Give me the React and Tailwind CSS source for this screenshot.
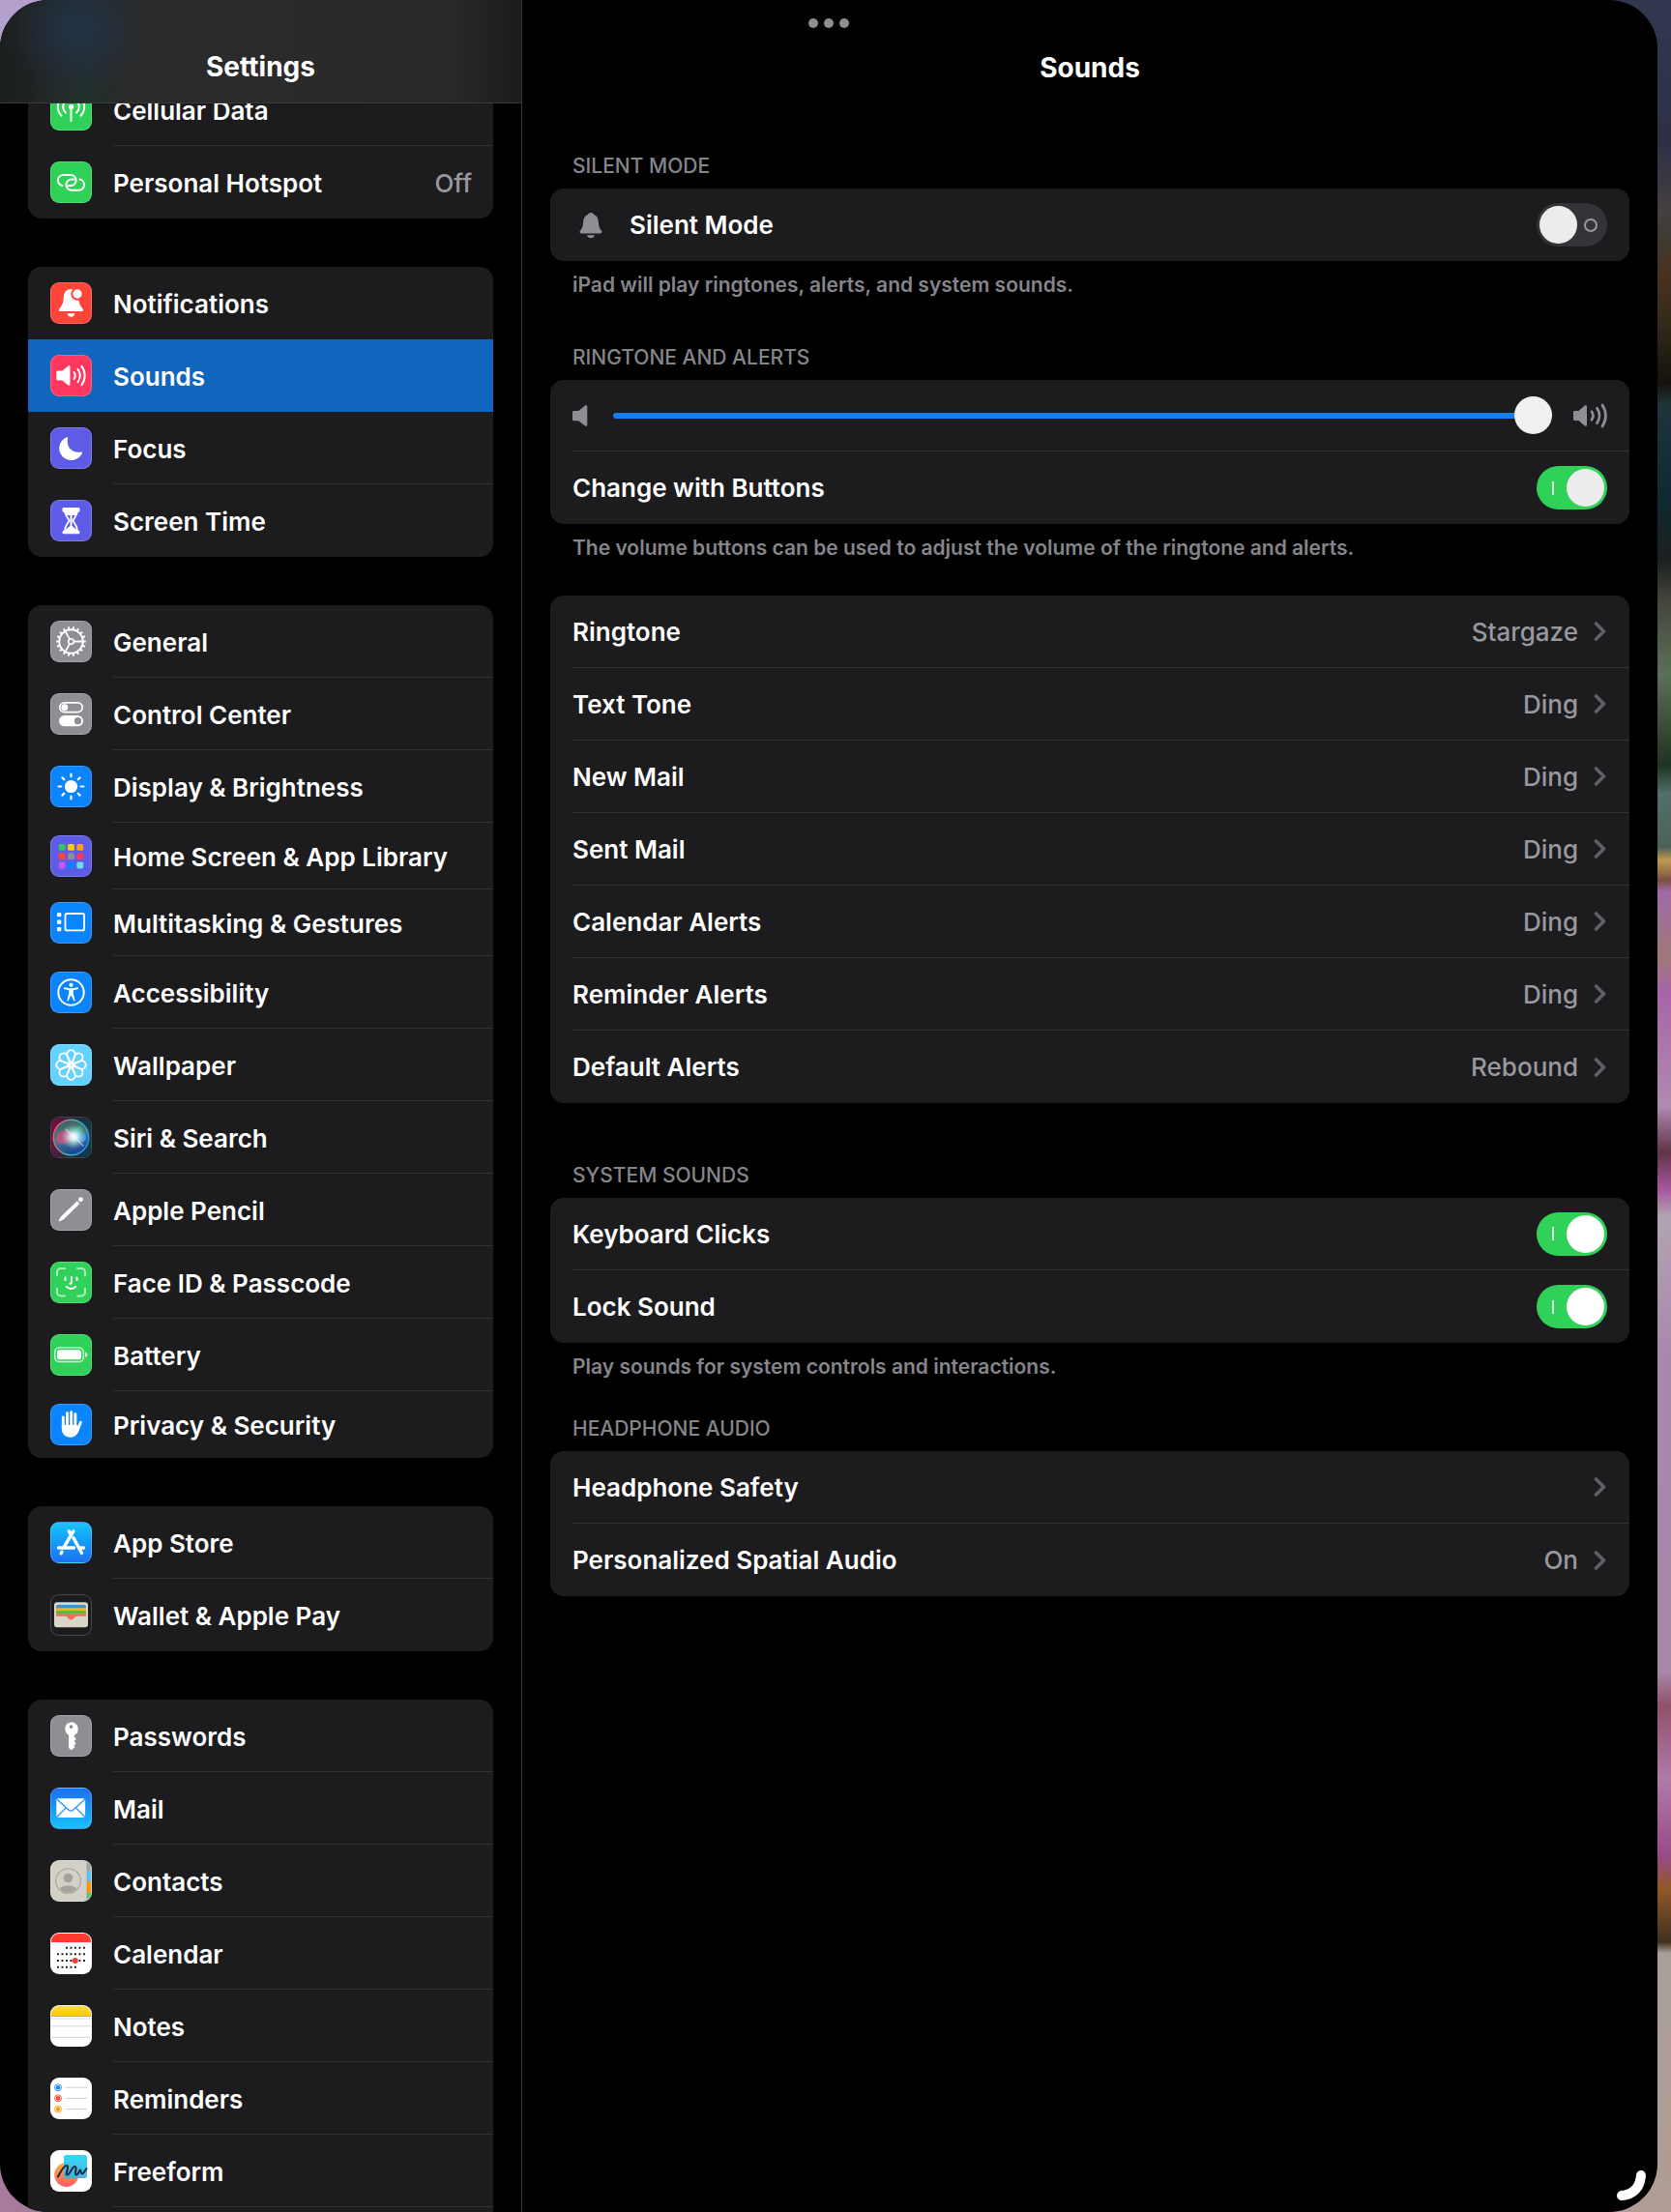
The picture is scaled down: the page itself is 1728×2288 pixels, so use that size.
import React, { useState } from 'react';

const WALLPAPER =
    'linear-gradient(to bottom, #313850 0%, #2d3045 6.4%, #453f40 9.6%, #3f3a30 10.9%, #4a3020 12.5%, #352c1c 14.4%, #14120a 17.3%, #20343a 18.3%, #0e2a30 22.4%, #1c2020 25.3%, #45483c 27.3%, #5b7059 30.5%, #1f3320 34.6%, #52706a 35.9%, #4d6058 38.3%, #c09a50 38.9%, #7a5040 39.8%, #a06aa8 40.3%, #a07878 43.3%, #a864a8 44.9%, #b08ab0 50%, #603448 52.1%, #a858a0 53.8%, #b0a4b0 55%, #a888ac 61.4%, #a888a8 75.6%, #90506a 77.1%, #b07aa8 80.4%, #984a88 83.9%, #905828 85.4%, #403020 87.8%, #a8a098 88.3%, #b09c94 100%)';

const teeth = Array.from({ length: 18 }, (_, i) => i * 20);
const petals = [0, 45, 90, 135, 180, 225, 270, 315];

const glyphs = {
    cellular: (
        <g fill="none" stroke="#fff" strokeWidth="2" strokeLinecap="round">
            <circle cx="21.5" cy="18.5" r="2.6" fill="#fff" stroke="none" />
            <path d="M21.5 19v14M15.8 24.5a8.2 8.2 0 0 1 0-12M27.2 24.5a8.2 8.2 0 0 0 0-12M11.5 27.7a13.4 13.4 0 0 1 0-18.4M31.5 27.7a13.4 13.4 0 0 0 0-18.4" />
        </g>
    ),
    hotspot: (
        <g fill="none" stroke="#fff" strokeWidth="2" strokeLinecap="round">
            <path d="M12.5 25a5.6 5.6 0 0 1 1-11.1h7.5a5.6 5.6 0 0 1 0 11.2h-2" />
            <path d="M30.5 18.6a5.6 5.6 0 0 1-1 11.1H22a5.6 5.6 0 0 1 0-11.2h2" />
        </g>
    ),
    notifications: (
        <g>
            <path fill="#fff" d="M21.5 7c-5.2 0-7.4 4-7.7 8.5-.3 5.5-1.3 8-4.3 11.8-1 1.4-.6 2.700 1.100 2.700h21.800c1.700 0 2.100-1.300 1.100-2.700-3-3.800-4-6.300-4.300-11.800C28.900 11 26.700 7 21.500 7zM17.600 32.200h7.800c-.4 2.300-1.900 3.600-3.900 3.600s-3.500-1.300-3.900-3.600z" />
            <circle cx="28" cy="12" r="5.7" fill="#fff" stroke="#ff453a" strokeWidth="2" />
        </g>
    ),
    sounds: (
        <g fill="none" stroke="#fff" strokeWidth="2" strokeLinecap="round">
            <path fill="#fff" stroke="none" d="M8 16.5h4.500l6-5c1-.8 2-.3 2 .8v18.500c0 1.100-1 1.600-2 .8l-6-5H8c-1 0-1.700-.7-1.700-1.700v-6.700c0-1 .7-1.700 1.700-1.700z" />
            <path d="M24.500 18a6 6 0 0 1 0 7M28.500 14.800a11 11 0 0 1 0 13.400M32.500 11.800a16.500 16.500 0 0 1 0 19.400" />
        </g>
    ),
    focus: (
        <path fill="#fff" d="M17.300 10.200c.5-.2 1.100.2.900.8-2.200 8 3.500 16.500 13.900 14.600.7-.1 1.200.5.900 1.100C31 31 26.800 34 21.800 34 15 34 9.200 28.600 9.200 21.800c0-5.200 3.400-9.800 8.100-11.600z" />
    ),
    screenTime: (
        <g>
            <path fill="none" stroke="#fff" strokeWidth="1.800" d="M15 10.500c0 6 2.500 7.500 4.700 11-2.200 3.500-4.700 5-4.700 11M28 10.500c0 6-2.500 7.500-4.700 11 2.200 3.500 4.700 5 4.700 11" />
            <path fill="#fff" d="M14 8h15c1 0 1.500.6 1.500 1.500V11c0 1-.5 1.700-1.500 1.700h-.4c-.4 1.200-1 2.300-1.700 3.200H16.100c-.7-.9-1.300-2-1.700-3.200H14c-1 0-1.500-.7-1.500-1.700V9.500c0-.9.5-1.500 1.500-1.500z" />
            <path fill="#fff" d="M20.500 16h2v11c1.500 1.500 4 2.500 5 5.500H15.500c1-3 3.500-4 5-5.500z" />
            <rect x="12.5" y="31.8" width="18" height="3.4" rx="1.5" fill="#fff" />
        </g>
    ),
    general: (
        <g fill="none" stroke="#fff" strokeWidth="2">
            <circle cx="21.5" cy="21.5" r="12.2" />
            <circle cx="21.5" cy="21.5" r="2.8" strokeWidth="1.6" />
            <path strokeWidth="1.8" d="M24.3 21.5h9.400M20.100 19.100l-4.700-8.200M20.100 23.900l-4.700 8.200" />
            {teeth.map((a) => (
                <path key={a} d="M21.5 9V6.200" transform={`rotate(${a + 10} 21.5 21.5)`} />
            ))}
        </g>
    ),
    controlCenter: (
        <g>
            <rect x="9.8" y="9.8" width="23.4" height="9.9" rx="4.95" fill="none" stroke="#fff" strokeWidth="1.7" />
            <circle cx="14.8" cy="14.75" r="3.4" fill="#fff" />
            <rect x="9" y="23" width="25" height="11.3" rx="5.65" fill="#fff" />
            <circle cx="28.5" cy="28.65" r="3.6" fill="#8e8e93" />
        </g>
    ),
    display: (
        <g>
            <circle cx="21.5" cy="21.5" r="6.6" fill="#fff" />
            {petals.map((a) => (
                <path key={a} d="M21.5 11.300V8.600" stroke="#fff" strokeWidth="2.2" strokeLinecap="round" transform={`rotate(${a} 21.5 21.5)`} />
            ))}
        </g>
    ),
    homeScreen: (
        <g>
            {['#34c759', '#ffcc00', '#ff9f0a', '#ff453a', '#8e8e93', '#ff375f', '#bf5af2', '#0a84ff', '#66e0e8'].map((c, i) => (
                <rect key={c} x={8.8 + (i % 3) * 9.3} y={9 + Math.floor(i / 3) * 9.3} width="6.8" height="6.8" rx="1.6" fill={c} />
            ))}
        </g>
    ),
    multitasking: (
        <g fill="#fff">
            <rect x="7" y="11" width="4.3" height="4.3" rx=".8" />
            <rect x="7" y="18.5" width="4.3" height="4.3" rx=".8" />
            <rect x="7" y="26" width="4.3" height="4.3" rx=".8" />
            <rect x="15.5" y="12" width="19.6" height="17.4" rx="2" fill="none" stroke="#fff" strokeWidth="1.9" />
        </g>
    ),
    accessibility: (
        <g fill="none" stroke="#fff" strokeLinecap="round" strokeLinejoin="round">
            <circle cx="21.5" cy="21.5" r="13.2" strokeWidth="2" />
            <circle cx="21.5" cy="13.8" r="2.1" fill="#fff" stroke="none" />
            <path strokeWidth="1.9" d="M14.8 17.3l4.700.9h4l4.700-.9" />
            <path fill="#fff" strokeWidth="1.2" d="M19.900 18.300h3.200v4l1.900 7.600-3.200-6.400h-.6L18 29.900l1.900-7.600z" />
        </g>
    ),
    wallpaper: (
        <g fill="none" stroke="#fff" strokeWidth="1.7" strokeLinejoin="round">
            {petals.map((a) => (
                <path key={a} d="M21.5 20L17.900 12.600a4.200 4.200 0 1 1 7.200 0z" transform={`rotate(${a} 21.5 21.5)`} />
            ))}
            <circle cx="21.5" cy="21.5" r="2" />
        </g>
    ),
    siri: (
        <g>
            <defs>
                <linearGradient id="siriBg" x1="0" y1="0.3" x2="1" y2="0.5">
                    <stop offset="0" stopColor="#7a0f3c" />
                    <stop offset=".45" stopColor="#2f2440" />
                    <stop offset="1" stopColor="#083f4a" />
                </linearGradient>
                <linearGradient id="siriRing" x1="0" y1=".4" x2="1" y2=".7">
                    <stop offset="0" stopColor="#ff4a80" />
                    <stop offset=".5" stopColor="#35c98e" />
                    <stop offset="1" stopColor="#2f8dff" />
                </linearGradient>
                <linearGradient id="siriOrb" x1=".2" y1="0" x2=".5" y2="1">
                    <stop offset="0" stopColor="#3c5a58" />
                    <stop offset=".5" stopColor="#4f7f86" />
                    <stop offset="1" stopColor="#153f9a" />
                </linearGradient>
                <radialGradient id="siriGlow" cx=".58" cy=".48" r=".38">
                    <stop offset="0" stopColor="#fff" />
                    <stop offset=".3" stopColor="#e6fbf7" stopOpacity=".85" />
                    <stop offset="1" stopColor="#7fd8d0" stopOpacity="0" />
                </radialGradient>
            </defs>
            <rect width="43" height="43" rx="9" fill="url(#siriBg)" />
            <circle cx="21.5" cy="21.5" r="18.3" fill="url(#siriOrb)" stroke="url(#siriRing)" strokeWidth="1.4" />
            <path d="M24 21C19 12 8 12.500 7 21s9 11 17 0z" fill="#e8437f" opacity=".75" />
            <path d="M24 20.500c5-6 12-5 13 .5s-8 8-13-.5z" fill="#3d9cf5" opacity=".85" />
            <path d="M23 21c1-8 5-12 9-11 3 3 2 8-9 11z" fill="#2fb583" opacity=".6" />
            <circle cx="21.5" cy="21.5" r="17" fill="url(#siriGlow)" />
            <path d="M16 13l18 17" stroke="#fff" strokeWidth="1.6" strokeLinecap="round" opacity=".45" />
        </g>
    ),
    pencil: (
        <g fill="#fff">
            <path d="M27.8 12.3l2.700 2.700-16.700 16.200-4 2c-.6.3-1.200-.3-.9-.9l2-3.900z" />
            <circle cx="31.5" cy="10.7" r="2.4" />
        </g>
    ),
    faceId: (
        <g fill="none" stroke="#fff" strokeWidth="2" strokeLinecap="round">
            <path opacity=".6" d="M7 14.500V11a4 4 0 0 1 4-4h4M28 7h4a4 4 0 0 1 4 4v3.500M36 28v3.500a4 4 0 0 1-4 4h-4M15 35.500h-4a4 4 0 0 1-4-4V28" />
            <path d="M15.500 16.500v2.500M27.500 16.500v2.500M22 16v5.200c0 1-.6 1.600-1.700 1.600M16.800 26c2.600 2.500 6.800 2.500 9.400 0" />
        </g>
    ),
    battery: (
        <g>
            <rect x="4.8" y="14" width="29.5" height="14.5" rx="4.5" fill="none" stroke="#fff" strokeOpacity=".7" strokeWidth="1.6" />
            <rect x="7" y="16.2" width="25" height="10.1" rx="2.5" fill="#fff" />
            <path fill="#fff" fillOpacity=".7" d="M36 18.600c1.700.3 2.500 1.400 2.500 2.700s-.8 2.400-2.500 2.700z" />
        </g>
    ),
    privacy: (
        <g fill="none" stroke="#fff" strokeWidth="2.9" strokeLinecap="round">
            <path d="M13.3 14v12M17.5 9.800V24M21.700 8.800V24M25.900 10.800V24M31.400 19.200l-2.900 7.300" />
            <path fill="#fff" stroke="none" d="M11.900 22h15.400l2.800 4.500c-1.400 4.500-4 8.200-9.100 8.200-5.700 0-9.100-3.600-9.100-9z" />
        </g>
    ),
    appStore: (
        <g fill="none" stroke="#fff" strokeWidth="3.4" strokeLinecap="round">
            <path d="M23.900 9.800L14.400 25.900M19.300 9.800l2 3.400M24 16.800l8.500 15.700M8.500 27h16M31.500 27H34.500M12 31.300l-.9 1.500" />
        </g>
    ),
    wallet: (
        <g>
            <rect x="4" y="8.3" width="35" height="26" rx="3" fill="#d9d6c9" />
            <path fill="#4093c4" d="M6 13a2 2 0 0 1 2-2h27a2 2 0 0 1 2 2v2H6z" />
            <path fill="#f0b51f" d="M6 14.200h31v3.300H6z" />
            <path fill="#6cb23e" d="M6 17h31v3.400H6z" />
            <path fill="#ee6e5a" d="M6 20.200h31V24H27c-1.800 0-2.300 3.500-5.500 3.500S17.800 24 16 24H6z" />
            <path fill="#d9d6c9" d="M5 22.800h10.500c2.500 0 3 3.600 6 3.600s3.500-3.600 6-3.600H38v8H5z" />
        </g>
    ),
    passwords: (
        <path fill="#fff" fillRule="evenodd" d="M21.5 7.200a7.200 7.200 0 0 1 3.300 13.600v2l1.900 1.900-2.100 2.300 2.100 2.300-2.400 2.500 1.300 1.300-3.300 3c-.5.4-.8.3-1.200-.1l-2-2V20.700a7.200 7.200 0 0 1 2.400-13.500zm0 3a1.900 1.900 0 1 0 0 3.800 1.900 1.900 0 0 0 0-3.800z" />
    ),
    mail: (
        <g>
            <rect x="6.3" y="11.3" width="29.8" height="19.6" rx="2" fill="#fff" />
            <path fill="none" stroke="#2a8df5" strokeWidth="1.2" d="M6.800 12l12 11c1.700 1.500 3.300 1.500 5 0l12-11M6.800 30.500l9.300-9.600M35.800 30.500l-9.300-9.600" />
        </g>
    ),
    contacts: (
        <g>
            <rect x="35" width="8" height="43" fill="#a3a39d" />
            <rect x="38" y="11" width="5" height="11" fill="#5ac0f5" />
            <rect x="38" y="22.5" width="5" height="11" fill="#ff9500" />
            <rect x="38" y="34" width="5" height="9" fill="#4cd062" />
            <rect width="37.5" height="43" fill="#d3d1c7" />
            <circle cx="18.5" cy="21.5" r="12.8" fill="none" stroke="#a8a19a" strokeWidth="1.1" />
            <circle cx="18.5" cy="18.5" r="4.8" fill="#a8a19a" />
            <path fill="#a8a19a" d="M9.600 29.600c1.500-2 5-3.400 8.900-3.400s7.400 1.400 8.900 3.400a12 12 0 0 1-17.800 0z" />
        </g>
    ),
    calendar: (
        <g>
            <rect width="43" height="43" fill="#fff" />
            <rect width="43" height="10" fill="#ff3b30" />
            <g stroke="#1c1c1e" strokeWidth="1.9" strokeDasharray="1.9 2.6">
                <path d="M16 15.800h20.500M7 22.300h29.500M7 29h29.500M7 35.700h20.500" />
            </g>
            <circle cx="25.8" cy="29" r="3" fill="#ff3b30" />
        </g>
    ),
    notes: (
        <g>
            <defs>
                <linearGradient id="notesTop" x1="0" y1="0" x2="0" y2="1">
                    <stop offset="0" stopColor="#ffdc4d" />
                    <stop offset="1" stopColor="#fcc800" />
                </linearGradient>
            </defs>
            <rect width="43" height="43" fill="#fff" />
            <rect width="43" height="11" fill="url(#notesTop)" />
            <path d="M0 11.500h43" stroke="#b8b09a" />
            <path d="M1 14h42" stroke="#b5b5b5" strokeDasharray="1.2 1.4" />
            <path d="M0 21.800h43M0 33.300h43" stroke="#d4d4d8" />
        </g>
    ),
    reminders: (
        <g>
            <rect width="43" height="43" fill="#fff" />
            {['#1f86ff', '#ff453a', '#ff9f0a'].map((c, i) => (
                <g key={c}>
                    <circle cx="8" cy={10.2 + i * 11.2} r="3.5" fill="none" stroke={c} strokeWidth=".9" />
                    <circle cx="8" cy={10.2 + i * 11.2} r="2.3" fill={c} />
                    <path d={`M15.500 ${10.2 + i * 11.2}h22.500`} stroke="#cfcfd3" />
                </g>
            ))}
        </g>
    ),
    freeform: (
        <g>
            <defs>
                <linearGradient id="ffCircle" x1="0" y1="0" x2="0" y2="1">
                    <stop offset="0" stopColor="#ffae33" />
                    <stop offset="1" stopColor="#ff5a68" />
                </linearGradient>
                <linearGradient id="ffSquare" x1="0" y1="0" x2="0" y2="1">
                    <stop offset="0" stopColor="#1fd6f7" />
                    <stop offset="1" stopColor="#4aa9dd" />
                </linearGradient>
            </defs>
            <rect width="43" height="43" fill="#fff" />
            <circle cx="16.7" cy="25.5" r="12.5" fill="url(#ffCircle)" />
            <rect x="14" y="5" width="24" height="24" rx="2.5" fill="url(#ffSquare)" opacity=".92" />
            <path fill="none" stroke="#0c2d48" strokeWidth="2" strokeLinecap="round" d="M8 27.500c3-6 6.500-12 9-11.500 3.500.8-2.500 9.500.5 9.500s5-9 8-8.500-1.500 8.500 1.500 8.500c2.500 0 3-5 4-5s0 4 2 4c1.500 0 3-3.500 4.500-5.500" />
        </g>
    )
};

const sidebarGroups = [
    [
        { id: 'cellular', label: 'Cellular Data', bg: 'bg-[#30d158]' },
        { id: 'hotspot', label: 'Personal Hotspot', bg: 'bg-[#30d158]', value: 'Off' }
    ],
    [
        { id: 'notifications', label: 'Notifications', bg: 'bg-[#ff453a]' },
        { id: 'sounds', label: 'Sounds', bg: 'bg-[#ff375f]' },
        { id: 'focus', label: 'Focus', bg: 'bg-[#5e5ce6]' },
        { id: 'screenTime', label: 'Screen Time', bg: 'bg-[#5e5ce6]' }
    ],
    [
        { id: 'general', label: 'General', bg: 'bg-[#8e8e93]' },
        { id: 'controlCenter', label: 'Control Center', bg: 'bg-[#8e8e93]' },
        { id: 'display', label: 'Display & Brightness', bg: 'bg-[#0a84ff]' },
        { id: 'homeScreen', label: 'Home Screen & App Library', bg: 'bg-[#5e5ce6]', compact: true },
        { id: 'multitasking', label: 'Multitasking & Gestures', bg: 'bg-[#0a84ff]', compact: true },
        { id: 'accessibility', label: 'Accessibility', bg: 'bg-[#0a84ff]' },
        { id: 'wallpaper', label: 'Wallpaper', bg: 'bg-[#64d2ff]' },
        { id: 'siri', label: 'Siri & Search', bg: 'bg-[#101820]' },
        { id: 'pencil', label: 'Apple Pencil', bg: 'bg-[#8e8e93]' },
        { id: 'faceId', label: 'Face ID & Passcode', bg: 'bg-[#30d158]' },
        { id: 'battery', label: 'Battery', bg: 'bg-[#30d158]' },
        { id: 'privacy', label: 'Privacy & Security', bg: 'bg-[#0a84ff]', compact: true }
    ],
    [
        { id: 'appStore', label: 'App Store', bg: 'bg-linear-to-b from-[#1dc3fb] to-[#1d6ff2]' },
        { id: 'wallet', label: 'Wallet & Apple Pay', bg: 'bg-[#1c1c1e]' }
    ],
    [
        { id: 'passwords', label: 'Passwords', bg: 'bg-[#8e8e93]' },
        { id: 'mail', label: 'Mail', bg: 'bg-linear-to-b from-[#1e6ff2] to-[#1dbffb]' },
        { id: 'contacts', label: 'Contacts', bg: 'bg-[#d3d1c7]' },
        { id: 'calendar', label: 'Calendar', bg: 'bg-white' },
        { id: 'notes', label: 'Notes', bg: 'bg-white' },
        { id: 'reminders', label: 'Reminders', bg: 'bg-white' },
        { id: 'freeform', label: 'Freeform', bg: 'bg-white' }
    ]
];

const tones = [
    ['Ringtone', 'Stargaze'],
    ['Text Tone', 'Ding'],
    ['New Mail', 'Ding'],
    ['Sent Mail', 'Ding'],
    ['Calendar Alerts', 'Ding'],
    ['Reminder Alerts', 'Ding'],
    ['Default Alerts', 'Rebound']
];

const SidebarIcon = ({ id, bg }) => (
    <span className={`block size-[43px] shrink-0 overflow-hidden rounded-[9px] border border-white/20 ${bg}`}>
        <svg viewBox="1 1 41 41" className="block size-full" aria-hidden="true">
            {glyphs[id]}
        </svg>
    </span>
);

const SidebarRow = ({ item, selected, divider, onSelect }) => (
    <button
        type="button"
        onClick={() => onSelect(item.id)}
        className={`flex w-full shrink-0 items-center gap-[22px] pl-[23px] text-left ${item.compact ? 'h-[69px]' : 'h-[75px]'} ${selected ? 'bg-[#1065bd]' : ''}`}
    >
        <SidebarIcon id={item.id} bg={item.bg} />
        <span className={`flex h-full flex-1 items-center justify-between border-b pt-0.5 pr-[22px] ${divider ? 'border-[#323234]' : 'border-transparent'}`}>
            <span className="whitespace-nowrap">{item.label}</span>
            {item.value && <span className="font-medium text-[#98989f]">{item.value}</span>}
        </span>
    </button>
);

const Sidebar = ({ selected, onSelect }) => (
    <aside className="flex w-[540px] shrink-0 flex-col border-r border-[#39393b]">
        <header className="z-10 flex h-[107px] shrink-0 items-center justify-center border-b border-[#3a3a3c] bg-[radial-gradient(circle_at_80px_30px,#223448_0%,#22344800_70px),radial-gradient(circle_at_85px_107px,#22302c_0%,#22302c00_60px),linear-gradient(to_right,#1c1f20_0%,#2b2b2b_26%,#29292b_86%,#1c1c1e_100%)] pt-8">
            <h1 className="text-[28px] font-bold">Settings</h1>
        </header>
        <nav className="flex min-h-0 flex-1 flex-col gap-[50px] overflow-hidden px-[29px]">
            {sidebarGroups.map((group, g) => {
                const first = g === 0;
                const last = g === sidebarGroups.length - 1;
                return (
                    <div
                        key={group[0].id}
                        className={`flex flex-col overflow-hidden bg-[#1c1c1e] ${first ? '-mt-[31px] shrink-0 rounded-b-[14px]' : ''} ${last ? 'min-h-0 flex-1 rounded-t-[14px]' : 'shrink-0'} ${!first && !last ? 'rounded-[14px]' : ''}`}
                    >
                        {group.map((item, i) => (
                            <SidebarRow
                                key={item.id}
                                item={item}
                                selected={item.id === selected}
                                divider={(last || i < group.length - 1) && item.id !== selected && group[i + 1]?.id !== selected}
                                onSelect={onSelect}
                            />
                        ))}
                    </div>
                );
            })}
        </nav>
    </aside>
);

const Toggle = ({ id, checked, onChange, knob = 'before:bg-white' }) => (
    <input
        id={id}
        type="checkbox"
        role="switch"
        checked={checked}
        onChange={(e) => onChange(e.target.checked)}
        className={`flex h-[45px] w-[73px] shrink-0 appearance-none items-center justify-between rounded-full bg-[#343438] px-[3px] before:size-[39px] before:rounded-full ${knob} after:mr-[7px] after:size-[14px] after:rounded-full after:border-2 after:border-[#98989d] checked:flex-row-reverse checked:bg-[#30d158] checked:after:mr-0 checked:after:ml-[13px] checked:after:w-[2px] checked:after:rounded-none checked:after:border-0 checked:after:bg-white/80`}
    />
);

const Card = ({ children, className = '' }) => (
    <div className={`divide-y divide-[#323234] overflow-hidden rounded-[14px] bg-[#1c1c1e] pl-[23px] ${className}`}>{children}</div>
);

const SectionLabel = ({ children, className = '' }) => (
    <h3 className={`mb-[11px] pl-[23px] text-[21px] leading-6 font-medium text-[#85858b] uppercase ${className}`}>{children}</h3>
);

const FootNote = ({ children }) => (
    <p className="mt-[13px] pl-[23px] text-[21px] leading-6 font-semibold text-[#85858b]">{children}</p>
);

const ToggleRow = ({ id, label, icon, ...toggle }) => (
    <div className="flex h-[75px] items-center pr-[23px]">
        {icon}
        <label htmlFor={id} className="flex-1">{label}</label>
        <Toggle id={id} {...toggle} />
    </div>
);

const LinkRow = ({ label, value }) => (
    <a href="#" className="flex h-[75px] items-center gap-4 pr-6">
        <span className="flex-1">{label}</span>
        {value && <span className="font-medium text-[#98989f]">{value}</span>}
        <svg viewBox="0 0 13 20" className="h-5 w-[13px]" fill="none" stroke="#606064" strokeWidth="3.6" strokeLinecap="round" strokeLinejoin="round" aria-hidden="true">
            <path d="M2.500 2l8 8-8 8" />
        </svg>
    </a>
);

const SoundsPane = () => {
    const [silent, setSilent] = useState(false);
    const [withButtons, setWithButtons] = useState(true);
    const [clicks, setClicks] = useState(true);
    const [lock, setLock] = useState(true);
    const [volume, setVolume] = useState(100);

    return (
        <main className="min-w-0 flex-1 overflow-hidden px-[29px]">
            <header className="flex h-[107px] items-center justify-center pt-8">
                <h2 className="text-[28px] font-bold">Sounds</h2>
            </header>

            <SectionLabel className="mt-[53px]">Silent Mode</SectionLabel>
            <Card>
                <ToggleRow
                    id="silent"
                    label="Silent Mode"
                    checked={silent}
                    onChange={setSilent}
                    knob="before:bg-[#ececec]"
                    icon={
                        <svg viewBox="0 0 24 28" className="mr-7 ml-[7px] h-7 w-6" fill="#8e8e93" aria-hidden="true">
                            <path d="M12 1c1.600 0 2.700.9 3 2.100 3.200 1 4.700 4 4.900 7.600.3 4.500 1 6.300 3.100 8.900.9 1.200.5 2.900-1.200 2.900H2.200C.5 22.500.1 20.800 1 19.600c2.100-2.600 2.800-4.400 3.100-8.900C4.300 7.100 5.800 4.100 9 3.100 9.300 1.900 10.400 1 12 1zM8 24.300h8c-.5 1.900-2 3-4 3s-3.500-1.100-4-3z" />
                        </svg>
                    }
                />
            </Card>
            <FootNote>iPad will play ringtones, alerts, and system sounds.</FootNote>

            <SectionLabel className="mt-[51px]">Ringtone and Alerts</SectionLabel>
            <Card>
                <div className="flex h-[74px] items-center pr-[23px]">
                    <svg viewBox="0 0 16 22" className="mr-[26px] h-[22px] w-4" fill="#8e8e93" aria-hidden="true">
                        <path d="M1.500 6h4.700L13 .6c1-.8 2.300-.2 2.300 1v18.800c0 1.200-1.300 1.800-2.300 1L6.200 16.200H1.500C.5 16.200 0 15.500 0 14.700V7.500C0 6.700.5 6 1.500 6z" />
                    </svg>
                    <input
                        type="range"
                        aria-label="Ringtone and alerts volume"
                        value={volume}
                        onChange={(e) => setVolume(Number(e.target.value))}
                        style={{ '--fill': `${volume}%` }}
                        className="h-[39px] min-w-0 flex-1 appearance-none bg-transparent [&::-webkit-slider-runnable-track]:h-[6px] [&::-webkit-slider-runnable-track]:rounded-full [&::-webkit-slider-runnable-track]:bg-[linear-gradient(to_right,#0f80f5_var(--fill),#39393d_var(--fill))] [&::-webkit-slider-thumb]:-mt-[17px] [&::-webkit-slider-thumb]:size-[39px] [&::-webkit-slider-thumb]:appearance-none [&::-webkit-slider-thumb]:rounded-full [&::-webkit-slider-thumb]:bg-[#f0f0f0]"
                    />
                    <svg viewBox="0 0 36 26" className="ml-[21px] h-[26px] w-9" fill="none" stroke="#8e8e93" strokeWidth="2.8" strokeLinecap="round" aria-hidden="true">
                        <path fill="#8e8e93" stroke="none" d="M2.500 8h4L12.800 2.600c1-.8 2.200-.3 2.200.9v19c0 1.200-1.200 1.700-2.200.9L6.500 18h-4C1.500 18 1 17.300 1 16.500v-7C1 8.700 1.500 8 2.500 8z" />
                        <path d="M20 8.800a7.500 7.500 0 0 1 0 8.400M25.500 5.300a13.500 13.500 0 0 1 0 15.400M31 2a19.500 19.500 0 0 1 0 22" />
                    </svg>
                </div>
                <ToggleRow id="with-buttons" label="Change with Buttons" checked={withButtons} onChange={setWithButtons} knob="before:bg-[#ececec]" />
            </Card>
            <FootNote>The volume buttons can be used to adjust the volume of the ringtone and alerts.</FootNote>

            <Card className="mt-[37px]">
                {tones.map(([label, value]) => (
                    <LinkRow key={label} label={label} value={value} />
                ))}
            </Card>

            <SectionLabel className="mt-[63px]">System Sounds</SectionLabel>
            <Card>
                <ToggleRow id="clicks" label="Keyboard Clicks" checked={clicks} onChange={setClicks} />
                <ToggleRow id="lock" label="Lock Sound" checked={lock} onChange={setLock} />
            </Card>
            <FootNote>Play sounds for system controls and interactions.</FootNote>

            <SectionLabel className="mt-10">Headphone Audio</SectionLabel>
            <Card>
                <LinkRow label="Headphone Safety" />
                <LinkRow label="Personalized Spatial Audio" value="On" />
            </Card>
        </main>
    );
};

const App = () => {
    const [page, setPage] = useState('sounds');

    return (
        <div
            className="h-screen overflow-hidden pr-[14px] font-['Inter','Liberation_Sans',sans-serif] text-[26px] font-semibold text-white"
            style={{ background: `linear-gradient(to bottom, #b3a0cc, #a87a9c) left / 120px 100% no-repeat, ${WALLPAPER}` }}
        >
            <div className="relative flex h-full overflow-hidden rounded-[50px] bg-black">
                <Sidebar selected={page} onSelect={setPage} />
                <SoundsPane />
                <button type="button" aria-label="Window controls" className="absolute top-[19px] left-1/2 flex -translate-x-1/2 gap-[6px]">
                    <span className="size-[10px] rounded-full bg-[#8e8e8e]" />
                    <span className="size-[10px] rounded-full bg-[#8e8e8e]" />
                    <span className="size-[10px] rounded-full bg-[#8e8e8e]" />
                </button>
                <svg viewBox="0 0 34 34" className="absolute right-[11px] bottom-[11px] size-[34px]" fill="none" stroke="#fff" strokeWidth="10" strokeLinecap="round" aria-hidden="true">
                    <path d="M8 28C20 27 27 20 28 7" />
                </svg>
            </div>
        </div>
    );
};

export default App;
